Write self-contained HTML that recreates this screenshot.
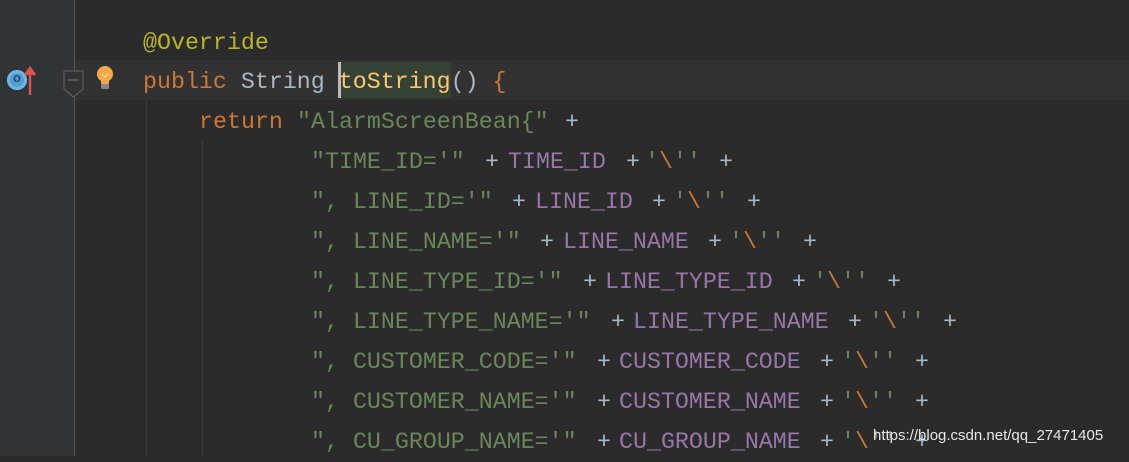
<!DOCTYPE html>
<html><head><meta charset="utf-8"><style>
body{margin:0;width:1129px;height:456px;background:#2b2b2b;overflow:hidden;position:relative;font-family:"Liberation Mono",monospace;font-size:23.3px}
.g{position:absolute;left:0;top:0;width:75px;height:456px;background:#313335}
.gl{position:absolute;left:74px;top:0;width:1px;height:456px;background:#555}
.cur{position:absolute;left:75px;top:60px;width:1054px;height:40px;background:#323232}
.t{position:absolute;white-space:pre;line-height:40px;color:#a9b7c6}
.k{color:#cc7832}.s{color:#6a8759}.c{color:#9876aa}.a{color:#bbb529}
.ig{position:absolute;width:1px;background:#3b3b3b}
</style></head><body>
<div class="g"></div><div class="gl"></div><div class="cur"></div>
<div class="ig" style="left:146px;top:100px;height:356px"></div>
<div class="ig" style="left:202px;top:140px;height:316px"></div>
<div style="position:absolute;left:339px;top:62px;width:112px;height:36px;background:#344134"></div>
<div style="position:absolute;left:338px;top:62px;width:3px;height:36px;background:#bbb"></div>
<div style="position:absolute;left:7px;top:70px;width:20px;height:20px;border-radius:50%;background:#4a9fd8;box-shadow:inset 0 0 0 3px #6fb6e6"></div>
<div style="position:absolute;left:7px;top:70px;width:20px;height:20px;line-height:20px;text-align:center;font:bold 13px 'Liberation Sans',sans-serif;color:#3a4a5a">o</div>
<svg style="position:absolute;left:22px;top:64px" width="16" height="32"><path d="M8 31V5M3 11L8 4L13 11" stroke="#d9534f" stroke-width="2.5" fill="#d9534f"/></svg>
<svg style="position:absolute;left:62px;top:70px" width="24" height="28"><path d="M2 1H21V19L11.5 27L2 19Z" fill="#313335" stroke="#666" stroke-width="1"/><path d="M6 10H17" stroke="#777" stroke-width="1.2"/></svg>
<svg style="position:absolute;left:95px;top:65px" width="20" height="26"><circle cx="10" cy="9" r="8" fill="#f2a94a"/><rect x="6" y="15" width="8" height="4" fill="#f2a94a"/><rect x="6" y="19" width="8" height="5" rx="1" fill="#888"/><path d="M7 9l3 3 3-3" stroke="#fde0a0" fill="none"/></svg>

<div class="t a" style="left:143px;top:23px">@Override</div>
<div class="t" style="left:143px;top:62px"><span class="k">public </span>String <span style="color:#ffc66d">toString</span>() <span class="k">{</span></div>
<div class="t k" style="left:199px;top:102px">return</div><div class="t s" style="left:297px;top:102px">"AlarmScreenBean{"</div><div class="t" style="left:565px;top:102px">+</div>

<div class="t s" style="left:311px;top:142px">"TIME_ID='"</div><div class="t" style="left:485px;top:142px">+</div><div class="t c" style="left:508px;top:142px">TIME_ID</div><div class="t" style="left:626px;top:142px">+</div><div class="t s" style="left:645px;top:142px">'<span class="k">\</span>''</div><div class="t" style="left:719px;top:142px">+</div>

<div class="t s" style="left:311px;top:182px">", LINE_ID='"</div><div class="t" style="left:512px;top:182px">+</div><div class="t c" style="left:535px;top:182px">LINE_ID</div><div class="t" style="left:652px;top:182px">+</div><div class="t s" style="left:673px;top:182px">'<span class="k">\</span>''</div><div class="t" style="left:747px;top:182px">+</div>

<div class="t s" style="left:311px;top:222px">", LINE_NAME='"</div><div class="t" style="left:540px;top:222px">+</div><div class="t c" style="left:563px;top:222px">LINE_NAME</div><div class="t" style="left:708px;top:222px">+</div><div class="t s" style="left:729px;top:222px">'<span class="k">\</span>''</div><div class="t" style="left:803px;top:222px">+</div>

<div class="t s" style="left:311px;top:262px">", LINE_TYPE_ID='"</div><div class="t" style="left:583px;top:262px">+</div><div class="t c" style="left:605px;top:262px">LINE_TYPE_ID</div><div class="t" style="left:792px;top:262px">+</div><div class="t s" style="left:813px;top:262px">'<span class="k">\</span>''</div><div class="t" style="left:887px;top:262px">+</div>

<div class="t s" style="left:311px;top:302px">", LINE_TYPE_NAME='"</div><div class="t" style="left:611px;top:302px">+</div><div class="t c" style="left:633px;top:302px">LINE_TYPE_NAME</div><div class="t" style="left:848px;top:302px">+</div><div class="t s" style="left:869px;top:302px">'<span class="k">\</span>''</div><div class="t" style="left:943px;top:302px">+</div>

<div class="t s" style="left:311px;top:342px">", CUSTOMER_CODE='"</div><div class="t" style="left:597px;top:342px">+</div><div class="t c" style="left:619px;top:342px">CUSTOMER_CODE</div><div class="t" style="left:820px;top:342px">+</div><div class="t s" style="left:841px;top:342px">'<span class="k">\</span>''</div><div class="t" style="left:915px;top:342px">+</div>

<div class="t s" style="left:311px;top:382px">", CUSTOMER_NAME='"</div><div class="t" style="left:597px;top:382px">+</div><div class="t c" style="left:619px;top:382px">CUSTOMER_NAME</div><div class="t" style="left:820px;top:382px">+</div><div class="t s" style="left:841px;top:382px">'<span class="k">\</span>''</div><div class="t" style="left:915px;top:382px">+</div>

<div class="t s" style="left:311px;top:422px">", CU_GROUP_NAME='"</div><div class="t" style="left:597px;top:422px">+</div><div class="t c" style="left:619px;top:422px">CU_GROUP_NAME</div><div class="t" style="left:820px;top:422px">+</div><div class="t s" style="left:841px;top:422px">'<span class="k">\</span>''</div><div class="t" style="left:915px;top:422px">+</div>

<div style="position:absolute;left:873px;top:427px;font:15px 'Liberation Sans',sans-serif;color:#e8e8e8;white-space:nowrap">https://blog.csdn.net/qq_27471405</div>
</body></html>
